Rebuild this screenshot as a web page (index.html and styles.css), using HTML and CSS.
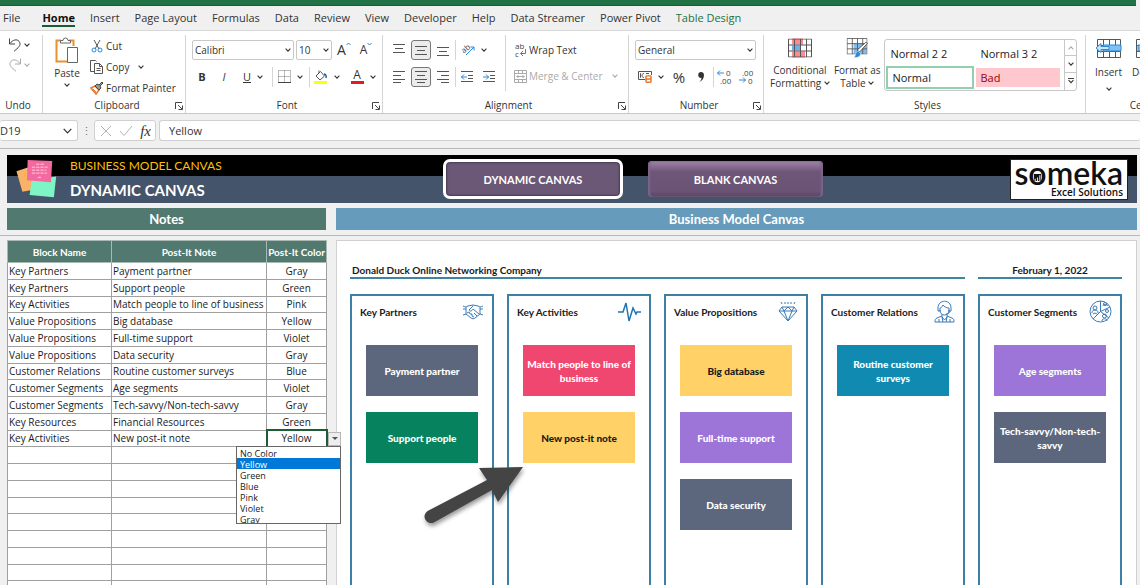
FILE: index.html
```html
<!DOCTYPE html>
<html lang="en">

<head>
    <meta charset="UTF-8">
    <meta name="viewport" content="width=device-width, initial-scale=1.0">
    <title>Business Model Canvas</title>
    <link rel="stylesheet" href="styles.css">
</head>

<body>
    <!-- shared icons -->
    <svg class="sprite" aria-hidden="true">
        <symbol id="chev" viewBox="0 0 6 4"><path d="M.6.7 3 3.1 5.4.7" fill="none" stroke="currentColor" stroke-width="1.1"/></symbol>
        <symbol id="launch" viewBox="0 0 8 8"><path d="M.5 7V.5H7M3 3l4 4M7.5 3.5v4h-4" fill="none" stroke="#444"/></symbol>
        <symbol id="grid" viewBox="0 0 24 19"><path d="M.5.5h23v18H.5zM.5 6.5h23M.5 12.5h23M6.500.5v18M12.500.5v18M18.500.5v18" fill="none" stroke="#555"/></symbol>
    </svg>

    <div class="titlebar"></div>
    <nav class="tabs">
        <a href="#">File</a>
        <a href="#" class="active">Home</a>
        <a href="#">Insert</a>
        <a href="#">Page Layout</a>
        <a href="#">Formulas</a>
        <a href="#">Data</a>
        <a href="#">Review</a>
        <a href="#">View</a>
        <a href="#">Developer</a>
        <a href="#">Help</a>
        <a href="#">Data Streamer</a>
        <a href="#">Power Pivot</a>
        <a href="#" class="design">Table Design</a>
    </nav>

    <div class="ribbon">
        <section class="group undo">
            <div class="group-body col">
                <button class="tool" aria-label="Undo"><svg width="14" height="14" viewBox="0 0 14 14" fill="none" stroke="#444"><path d="M1.500.5v5.500h5.500M1.700 5.700C5 1.500 9 .8 11 3.300c2 2.500.8 4.800-1 6.500L6 13.300"/></svg><svg class="chev"><use href="#chev"/></svg></button>
                <button class="tool off" aria-label="Redo"><svg width="14" height="14" viewBox="0 0 14 14" fill="none" stroke="currentColor"><path d="M12.500.5v5.500H7M12.300 5.700C9 1.500 5 .8 3 3.300c-2 2.500-.8 4.800 1 6.500l4 3.500"/></svg><svg class="chev"><use href="#chev"/></svg></button>
            </div>
            <footer>Undo</footer>
        </section>

        <section class="group clipboard">
            <div class="group-body">
                <button class="big">
                    <svg width="24" height="27" viewBox="0 0 24 27" fill="none"><path d="M6 3.500H1.500v21H12M14 3.500h4.500V9" stroke="#e8912d" stroke-width="2"/><path d="M5.500 6V3.500h2.500a2.500 2.500 0 0 1 5 0h2.500V6z" fill="#fff" stroke="#666"/><path d="M12.500 10.500h10v15h-10z" fill="#fff" stroke="#666"/></svg>
                    <span>Paste</span>
                    <svg class="chev"><use href="#chev"/></svg>
                </button>
                <div class="clip-list">
                    <button><svg width="14" height="14" viewBox="0 0 14 14" fill="none"><path d="M4 1l5 9M10 1L5 10" stroke="#555"/><circle cx="4" cy="11" r="2" stroke="#2b88d8"/><circle cx="10" cy="11" r="2" stroke="#2b88d8"/></svg>Cut</button>
                    <button><svg width="14" height="14" viewBox="0 0 14 14" fill="none" stroke="#555"><path d="M4.500 11.500H.5V.5h5l1 1M4.500 3.500h5l3 3v7h-8zM9.500 3.500v3h3M6.500 8.500h4M6.500 10.500h4"/></svg>Copy<svg class="chev"><use href="#chev"/></svg></button>
                    <button><svg width="14" height="14" viewBox="0 0 14 14" fill="none"><path d="M1 7l5 6 3-4-4-4z" fill="#fff" stroke="#e8762d" stroke-width="1.500"/><path d="M3 8l3 3" stroke="#e8762d"/><path d="M5 5l2-2 2 1 3-3 1 1-3 3 1 2-2 2z" fill="#999" stroke="#444"/></svg>Format Painter</button>
                </div>
            </div>
            <footer>Clipboard<svg class="launch"><use href="#launch"/></svg></footer>
        </section>

        <section class="group font">
            <div class="group-body col">
                <div class="row">
                    <span class="field font-name"><select aria-label="Font"><option>Calibri</option></select><svg class="chev"><use href="#chev"/></svg></span>
                    <span class="field font-size"><select aria-label="Font size"><option>10</option></select><svg class="chev"><use href="#chev"/></svg></span>
                    <button class="tool grow" aria-label="Increase font size"><span>A</span><svg width="5" height="4" viewBox="0 0 5 4"><path d="M.5 3l2-2 2 2" fill="none" stroke="#2b88d8"/></svg></button>
                    <button class="tool grow small" aria-label="Decrease font size"><span>A</span><svg width="5" height="4" viewBox="0 0 5 4"><path d="M.5 1l2 2 2-2" fill="none" stroke="#2b88d8"/></svg></button>
                </div>
                <div class="row">
                    <button class="tool"><b>B</b></button>
                    <button class="tool"><i>I</i></button>
                    <button class="tool wide"><u>U</u><svg class="chev"><use href="#chev"/></svg></button>
                    <span class="sep"></span>
                    <button class="tool wide" aria-label="Borders"><svg width="13" height="13" viewBox="0 0 13 13" fill="none" stroke="#777"><path d="M.5.5h12v12H.5zM6.500.5v12M.5 6.500h12" stroke-dasharray="1 1"/><path d="M0 12.500h13" stroke="#444"/></svg><svg class="chev"><use href="#chev"/></svg></button>
                    <span class="sep"></span>
                    <button class="tool wide" aria-label="Fill color"><svg width="14" height="14" viewBox="0 0 14 14"><path d="M2 6l4.500-4.500L10.500 6 6 10zM5 3V.5" fill="none" stroke="#555"/><path d="M10 4c2 0 2.500 2 2 4" fill="none" stroke="#1f5fa8" stroke-width="1.500"/><path d="M0 11h13v3H0z" fill="#ff0"/></svg><svg class="chev"><use href="#chev"/></svg></button>
                    <button class="tool wide" aria-label="Font color"><span class="font-color">A</span><svg class="chev"><use href="#chev"/></svg></button>
                </div>
            </div>
            <footer>Font<svg class="launch"><use href="#launch"/></svg></footer>
        </section>

        <section class="group alignment">
            <div class="group-body">
                <div class="col">
                    <div class="row">
                        <button class="tool" aria-label="Top align"><svg class="lines" viewBox="0 0 12 12"><path d="M0 .5h12M2 4.500h8M0 8.500h12"/></svg></button>
                        <button class="tool on" aria-label="Middle align"><svg class="lines" viewBox="0 0 12 12"><path d="M0 2.500h12M2 6.500h8M0 10.500h12"/></svg></button>
                        <button class="tool" aria-label="Bottom align"><svg class="lines" viewBox="0 0 12 12"><path d="M0 3.500h12M2 7.500h8M0 11.500h12"/></svg></button>
                        <span class="sep"></span>
                        <button class="tool wide" aria-label="Orientation"><svg width="14" height="13" viewBox="0 0 14 13" fill="none"><text x="0" y="9" font-size="8" fill="#444" transform="rotate(-40 4 6)">ab</text><path d="M5 12L13 4M9.500 4H13v3.500" stroke="#2b88d8"/></svg><svg class="chev"><use href="#chev"/></svg></button>
                    </div>
                    <div class="row">
                        <button class="tool" aria-label="Align left"><svg class="lines" viewBox="0 0 12 12"><path d="M0 .5h12M0 4.500h8M0 8.500h12M0 11.500h8"/></svg></button>
                        <button class="tool on" aria-label="Center"><svg class="lines" viewBox="0 0 12 12"><path d="M0 .5h12M2 4.500h8M0 8.500h12M2 11.500h8"/></svg></button>
                        <button class="tool" aria-label="Align right"><svg class="lines" viewBox="0 0 12 12"><path d="M0 .5h12M4 4.500h8M0 8.500h12M4 11.500h8"/></svg></button>
                        <span class="sep"></span>
                        <button class="tool" aria-label="Decrease indent"><svg class="lines" viewBox="0 0 12 12"><path d="M0 .5h12M7 4.500h5M7 7.500h5M0 10.500h12"/><path d="M6 6H0M3 3.500L.5 6 3 8.500" stroke="#2b88d8"/></svg></button>
                        <button class="tool" aria-label="Increase indent"><svg class="lines" viewBox="0 0 12 12"><path d="M0 .5h12M7 4.500h5M7 7.500h5M0 10.500h12"/><path d="M0 6h6M3 3.500L5.500 6 3 8.500" stroke="#2b88d8"/></svg></button>
                    </div>
                </div>
                <div class="wrap-list">
                    <button><svg width="13" height="14" viewBox="0 0 13 14" fill="none"><text x="1" y="6" font-size="8" fill="#444">ab</text><text x="1" y="14" font-size="8" fill="#444">c</text><path d="M11.500 6v4.500H6.500M9 8l-2.500 2.500L9 13" stroke="#2b88d8"/></svg>Wrap Text</button>
                    <button class="off"><svg width="13" height="13" viewBox="0 0 13 13" fill="none" stroke="currentColor"><path d="M.5.5h12v12H.5zM.5 3.500h12M.5 9.500h12M4.500.5v3M8.500.5v3M4.500 9.500v3M8.500 9.500v3M2.500 6.500h8M4.500 5L3 6.500 4.500 8M8.500 5L10 6.500 8.500 8"/></svg>Merge &amp; Center<svg class="chev"><use href="#chev"/></svg></button>
                </div>
            </div>
            <footer>Alignment<svg class="launch"><use href="#launch"/></svg></footer>
        </section>

        <section class="group number">
            <div class="group-body col">
                <div class="row">
                    <span class="field format"><select aria-label="Number format"><option>General</option></select><svg class="chev"><use href="#chev"/></svg></span>
                </div>
                <div class="row">
                    <button class="tool wide" aria-label="Accounting format"><svg width="14" height="13" viewBox="0 0 14 13" fill="none"><path d="M7 9.500H.5v-8h13V5M3 3.500H2.500v4H3M6 3.500c-1.500 0-2 1-2 2s.5 2 2 2M8 3.500h3" stroke="#555"/><path d="M8 6.500c0-1 5-1 5 0v5c0 1-5 1-5 0zM8 9h5" fill="#fff" stroke="#e8762d" stroke-width="1.500"/></svg><svg class="chev"><use href="#chev"/></svg></button>
                    <button class="tool percent">%</button>
                    <button class="tool" aria-label="Comma style"><svg width="8" height="12" viewBox="0 0 8 12"><path d="M4 1a3 3 0 1 0 .5 6C4.500 8.500 3.500 10 2 11c3-1 5-3.500 5-7 0-2-1.300-3-3-3z" fill="#333"/></svg></button>
                    <span class="sep"></span>
                    <button class="tool" aria-label="Increase decimal"><svg width="14" height="14" viewBox="0 0 14 14" fill="none"><path d="M7 3H.5M3 .5L.5 3 3 5.500" stroke="#2b88d8"/><text x="9" y="6" font-size="8" fill="#444">0</text><text x="3" y="14" font-size="8" fill="#444">.00</text></svg></button>
                    <button class="tool" aria-label="Decrease decimal"><svg width="14" height="14" viewBox="0 0 14 14" fill="none"><path d="M0 10h6.500M4 7.500L6.500 10 4 12.500" stroke="#2b88d8"/><text x="3" y="6" font-size="8" fill="#444">.00</text><text x="9" y="14" font-size="8" fill="#444">0</text></svg></button>
                </div>
            </div>
            <footer>Number<svg class="launch"><use href="#launch"/></svg></footer>
        </section>

        <section class="group styles">
            <div class="group-body">
                <button class="big">
                    <svg width="24" height="19" viewBox="0 0 24 19"><path d="M4 0h11v6H4zM4 13h13v6H4z" fill="#ff8a8f"/><path d="M4 7h8v5H4z" fill="#6cb0ea"/><use href="#grid" width="24" height="19"/></svg>
                    <span>Conditional<br>Formatting <svg class="chev"><use href="#chev"/></svg></span>
                </button>
                <button class="big">
                    <svg width="25" height="23" viewBox="0 0 25 23"><path d="M8 6h15v12H8z" fill="#83bdf0"/><use href="#grid" width="24" height="19"/><path d="M24 6l-9 10-3-2L22 5z" fill="#fff" stroke="#444"/><path d="M8 22c3 0 1-5 5-7l3 3c0 4-5 5-8 4z" fill="#2b88d8" stroke="#fff" stroke-width=".5"/></svg>
                    <span>Format as<br>Table <svg class="chev"><use href="#chev"/></svg></span>
                </button>
                <div class="gallery">
                    <div class="gallery-cells">
                        <button>Normal 2 2</button>
                        <button>Normal 3 2</button>
                        <button class="picked">Normal</button>
                        <button class="bad">Bad</button>
                    </div>
                    <div class="gallery-scroll">
                        <button class="off" aria-label="Scroll up"><svg class="chev up"><use href="#chev"/></svg></button>
                        <button aria-label="Scroll down"><svg class="chev"><use href="#chev"/></svg></button>
                        <button class="more" aria-label="More styles"><svg class="chev"><use href="#chev"/></svg></button>
                    </div>
                </div>
            </div>
            <footer>Styles</footer>
        </section>

        <section class="group cells">
            <div class="group-body">
                <button class="big">
                    <svg width="27" height="19" viewBox="0 0 27 19"><use href="#grid" x="2" width="24" height="19"/><path d="M8 6h18v6H8z" fill="#7fc0f5" stroke="#2b88d8"/><path d="M14 7.500H6V4.500L1 9l5 4.500v-3h8z" fill="#cfe6fa" stroke="#2b88d8"/></svg>
                    <span>Insert</span>
                    <svg class="chev"><use href="#chev"/></svg>
                </button>
                <button class="big">
                    <svg width="27" height="19" viewBox="0 0 27 19"><use href="#grid" x="2" width="24" height="19"/><path d="M4 6h12v6H4z" fill="#7fc0f5" stroke="#2b88d8"/></svg>
                    <span>Delete</span>
                    <svg class="chev"><use href="#chev"/></svg>
                </button>
            </div>
            <footer>Cells</footer>
        </section>
    </div>

    <div class="formula-bar">
        <div class="name-box"><input type="text" value="D19" aria-label="Name box"><svg width="9" height="6" viewBox="0 0 9 6"><path d="M.7.8l3.800 4 3.800-4" fill="none" stroke="#333" stroke-width="1.200"/></svg></div>
        <span class="grip">⋮</span>
        <div class="fx-box">
            <button aria-label="Cancel"><svg width="12" height="12" viewBox="0 0 12 12"><path d="M1 1l10 10M11 1L1 11" stroke="#b5b5b5" fill="none"/></svg></button>
            <button aria-label="Enter"><svg width="14" height="12" viewBox="0 0 14 12"><path d="M1 6l4 4.500L13 1" stroke="#b5b5b5" fill="none"/></svg></button>
            <button class="fx">fx</button>
        </div>
        <input class="formula" type="text" value="Yellow" aria-label="Formula">
    </div>

    <div class="frozen">
        <header class="banner">
            <svg class="notes-logo" viewBox="46 45 130 122" aria-hidden="true">
                <path d="M50 82l34-11 50 62-66 12z" fill="#f9b266"/>
                <path d="M96 110l75-12-7 64-74-7z" fill="#7df5c4"/>
                <path d="M84 48l75 3-4 65-73-6z" fill="#f4699f"/>
                <path d="M110 61h26M97 70h48M97 79h44M97 88h46M115 101h12" stroke="#ffd0e2" stroke-width="3" stroke-dasharray="10 3"/>
            </svg>
            <div class="titles">
                <p>BUSINESS MODEL CANVAS</p>
                <h1>DYNAMIC CANVAS</h1>
            </div>
            <button class="switch current">DYNAMIC CANVAS</button>
            <button class="switch">BLANK CANVAS</button>
            <div class="brand">
                <strong>s<span class="o">o<svg viewBox="0 0 6 6"><path d="M1 6V4M3 6V3M5 6V1" stroke="#ddd"/></svg></span>meka</strong>
                <span>Excel Solutions</span>
            </div>
        </header>
        <div class="section-bars">
            <h2 class="notes-bar">Notes</h2>
            <h2 class="canvas-bar">Business Model Canvas</h2>
        </div>
    </div>

    <main class="sheet">
        <div class="notes">
            <table>
                <thead>
                    <tr><th class="block">Block Name</th><th>Post-It Note</th><th class="color">Post-It Color</th></tr>
                </thead>
                <tbody>
                    <tr><td>Key Partners</td><td>Payment partner</td><td>Gray</td></tr>
                    <tr><td>Key Partners</td><td>Support people</td><td>Green</td></tr>
                    <tr><td>Key Activities</td><td>Match people to line of business</td><td>Pink</td></tr>
                    <tr><td>Value Propositions</td><td>Big database</td><td>Yellow</td></tr>
                    <tr><td>Value Propositions</td><td>Full-time support</td><td>Violet</td></tr>
                    <tr><td>Value Propositions</td><td>Data security</td><td>Gray</td></tr>
                    <tr><td>Customer Relations</td><td>Routine customer surveys</td><td>Blue</td></tr>
                    <tr><td>Customer Segments</td><td>Age segments</td><td>Violet</td></tr>
                    <tr><td>Customer Segments</td><td>Tech-savvy/Non-tech-savvy</td><td>Gray</td></tr>
                    <tr><td>Key Resources</td><td>Financial Resources</td><td>Green</td></tr>
                    <tr>
                        <td>Key Activities</td>
                        <td>New post-it note</td>
                        <td class="selected">Yellow
                            <button class="drop" aria-label="Show colors"></button>
                            <select class="colors" size="7" aria-label="Post-It Color">
                                <option>No Color</option>
                                <option selected>Yellow</option>
                                <option>Green</option>
                                <option>Blue</option>
                                <option>Pink</option>
                                <option>Violet</option>
                                <option>Gray</option>
                            </select>
                        </td>
                    </tr>
                    <tr><td></td><td></td><td></td></tr>
                    <tr><td></td><td></td><td></td></tr>
                    <tr><td></td><td></td><td></td></tr>
                    <tr><td></td><td></td><td></td></tr>
                    <tr><td></td><td></td><td></td></tr>
                    <tr><td></td><td></td><td></td></tr>
                    <tr><td></td><td></td><td></td></tr>
                    <tr><td></td><td></td><td></td></tr>
                    <tr><td></td><td></td><td></td></tr>
                </tbody>
            </table>
        </div>

        <div class="canvas">
            <div class="company">Donald Duck Online Networking Company</div>
            <div class="date">February 1, 2022</div>

            <section class="block">
                <h3>Key Partners
                    <svg width="22" height="18" viewBox="0 0 22 18"><path d="M1 3c2 1 3 1 5 0l5-1 5 1c2 1 3 1 5 0M1 12l3-1M21 12l-3-1M4 4v7l5 4c1 1 3 1 4 0l5-4V4M11 3L7 7c1 2 3 1 4-1l6 5M12 10l3 3M5 10l2-1 1 2 2 0 0 2 2 1M1 6h3M18 6h3"/></svg>
                </h3>
                <div class="post gray">Payment partner</div>
                <div class="post green">Support people</div>
            </section>
            <section class="block">
                <h3>Key Activities
                    <svg width="23" height="22" viewBox="0 0 23 22"><path class="bold" d="M0 11h5l3-9 3 18 4-13 3 6 1-2h4"/></svg>
                </h3>
                <div class="post pink">Match people to line of business</div>
                <div class="post yellow">New post-it note</div>
            </section>
            <section class="block">
                <h3>Value Propositions
                    <svg width="20" height="22" viewBox="0 0 20 22"><path d="M4 6h12l3 4-9 10L1 10zM1 10h18M4 6l2 4 4 10 4-10 2-4M6 10l4-4 4 4M3 1l1 2M7 1v2M10 1v2M13 1v2M17 1l-1 2"/></svg>
                </h3>
                <div class="post yellow">Big database</div>
                <div class="post violet">Full-time support</div>
                <div class="post gray">Data security</div>
            </section>
            <section class="block">
                <h3>Customer Relations
                    <svg width="21" height="23" viewBox="0 0 21 23"><path d="M4 8c0-9 13-9 13 0v3h-2V8c-2 0-5-1-6-3-1 2-2 3-3 3v3H4zM6 10c0 3 2 5 4.500 5S15 13 15 10M16 11c0 2-2 3-4 3M8 14v3l2.500 3 2.500-3v-3M8 16l-5 2c-2 1-2 2-2 4h19c0-2 0-3-2-4l-5-2M8 17l1 5M13 17l-1 5M5 19v3M16 19v3"/></svg>
                </h3>
                <div class="post blue">Routine customer surveys</div>
            </section>
            <section class="block">
                <h3>Customer Segments
                    <svg width="23" height="23" viewBox="0 0 23 23"><circle cx="11.500" cy="11.500" r="10.500"/><path d="M11.500 1v10.500L4 19M11.500 11.500L21 7M11.500 11.500L20 18M3 13c0-2 1-3 3-3s3 1 3 3M14 6c0-2 4-2 5 0M13 21c0-3 5-3 5 0M4 14l2-1 2 1"/><circle cx="6" cy="8" r="2"/><circle cx="16" cy="4" r="1.500"/><circle cx="15.500" cy="16" r="2"/><circle cx="18" cy="11" r="1.500"/></svg>
                </h3>
                <div class="post violet">Age segments</div>
                <div class="post gray">Tech-savvy/Non-tech-savvy</div>
            </section>

            <svg class="arrow" viewBox="0 0 110 70" aria-hidden="true"><path d="M103 2L59 3l8 12L7.600 46a6.500 6.500 0 0 0 6.200 11.400L72 25l6 12z" fill="#444"/></svg>
        </div>
    </main>
</body>

</html>
```
FILE: styles.css
```css
* {
    box-sizing: border-box;
}

body {
    margin: 0;
    height: 100vh;
    overflow: hidden;
    display: flex;
    flex-direction: column;
    background-color: #f0f0f0;
    font-family: "Open Sans", "Noto Sans", sans-serif;
    font-size: 10px;
    color: #333;
}

button,
input,
select {
    font: inherit;
    color: inherit;
    background: none;
    border: none;
    margin: 0;
    padding: 0;
}

h1,
h2,
h3,
p {
    margin: 0;
}

svg {
    flex: none;
    overflow: visible;
}

.sprite {
    display: none;
}

.chev {
    width: 6px;
    height: 4px;
}

.up {
    transform: rotate(180deg);
}

/* ribbon */
.titlebar {
    flex: none;
    height: 6px;
    margin-right: 4px;
    background-color: #217346;
    border-bottom: 1px solid #195c37;
}

.tabs {
    flex: none;
    display: flex;
    gap: 15px;
    height: 24px;
    padding-left: 3px;
    font-size: 11px;
    white-space: nowrap;
}

.tabs a {
    height: 21px;
    line-height: 23px;
    color: #333;
    text-decoration: none;
}

.tabs .active {
    margin-left: 7px;
    font-weight: bold;
    color: #111;
    border-bottom: 2px solid #185c37;
}

.tabs .design {
    color: #217346;
}

.ribbon {
    flex: none;
    display: flex;
    height: 84px;
    background-color: #fff;
    border-top: 1px solid #d8d8d8;
    border-bottom: 1px solid #c8c8c8;
    overflow: hidden;
    white-space: nowrap;
}

.group {
    flex: none;
    display: flex;
    flex-direction: column;
    margin: 4px 0 0;
    padding-left: 6px;
    border-right: 1px solid #d5d5d5;
}

.group-body {
    flex: none;
    display: flex;
    height: 63px;
}

.group footer {
    position: relative;
    height: 14px;
    line-height: 14px;
    text-align: center;
}

.launch {
    position: absolute;
    right: 2px;
    top: 4px;
    width: 8px;
    height: 8px;
}

.col {
    display: flex;
    flex-direction: column;
}

.row {
    display: flex;
    align-items: center;
    height: 27px;
    padding-top: 2px;
}

.tool {
    display: flex;
    align-items: center;
    justify-content: center;
    width: 20px;
    height: 20px;
    margin-right: 2px;
}

.tool.wide {
    width: 34px;
    gap: 6px;
}

.tool.on {
    background-color: #ececec;
    border: 1px solid #777;
    border-radius: 3px;
}

.off {
    color: #aaa;
}

.sep {
    width: 1px;
    height: 20px;
    background-color: #d5d5d5;
}

.big {
    display: flex;
    flex-direction: column;
    align-items: center;
    padding-top: 3px;
    line-height: 13px;
}

.field {
    position: relative;
    display: flex;
    align-items: center;
    height: 20px;
    margin-right: 2px;
    border: 1px solid #c8c8c8;
    border-radius: 2px;
}

.field select {
    appearance: none;
    width: 100%;
    padding-left: 2px;
}

.field .chev {
    position: absolute;
    right: 2px;
}

.undo {
    width: 43px;
    padding: 0 6px 0 0;
}

.undo .tool {
    width: 38px;
    height: 20px;
}

.undo .tool svg + svg {
    margin-left: 2px;
}

.clipboard {
    width: 143px;
}

.clipboard .group-body {
    gap: 5px;
}

.clipboard .big {
    width: 36px;
    gap: 3px;
    padding-top: 2px;
}

.clip-list button,
.wrap-list button {
    display: flex;
    align-items: center;
    gap: 2px;
    height: 21px;
}

.clip-list .chev,
.wrap-list .chev {
    margin-left: 7px;
}

.font {
    width: 197px;
}

.font-name {
    width: 102px;
}

.font-size {
    width: 36px;
}

.grow {
    align-items: flex-start;
    font-size: 14px;
    line-height: 20px;
}

.grow svg {
    margin-top: 2px;
}

.grow.small {
    font-size: 12px;
}

.font .row b,
.font .row i,
.font .row u {
    font-size: 11px;
}

.font-color {
    width: 13px;
    font-size: 12px;
    line-height: 12px;
    border-bottom: 3px solid #e01b24;
}

.alignment {
    width: 246px;
}

.lines {
    width: 12px;
    height: 12px;
    fill: none;
    stroke: #555;
}

.alignment .sep {
    margin-right: 1px;
}

.wrap-list {
    margin-left: 4px;
    padding: 2px 0 0 8px;
    border-left: 1px solid #d5d5d5;
    height: 56px;
}

.wrap-list button {
    height: 26px;
}

.number {
    width: 135px;
}

.format {
    width: 121px;
}

.number .tool.wide {
    width: 32px;
}

.percent {
    font-size: 15px;
}

.styles {
    width: 322px;
}

.styles .group-body {
    gap: 4px;
}

.styles .big {
    gap: 6px;
}

.styles .big > svg {
    height: 20px;
}

.styles .big .chev {
    vertical-align: 2px;
}

.gallery {
    display: flex;
    height: 52px;
    margin-top: 4px;
    border: 1px solid #c8c8c8;
    border-radius: 3px;
}

.gallery-cells {
    display: grid;
    grid-template-columns: 88px 84px;
    grid-template-rows: 24px 23px;
    gap: 1px 2px;
    padding: 1px 4px 1px 1px;
    font-size: 11px;
}

.gallery-cells button {
    padding-left: 4px;
    text-align: left;
    color: #222;
}

.gallery-cells .picked {
    border: 2px solid #93cfae;
}

.gallery-cells .bad {
    margin: 2px 0;
    background-color: #ffc7ce;
    color: #9c0006;
}

.gallery-scroll {
    display: grid;
    width: 12px;
    border-left: 1px solid #c8c8c8;
}

.gallery-scroll button {
    display: flex;
    align-items: center;
    justify-content: center;
}

.gallery-scroll button + button {
    border-top: 1px solid #c8c8c8;
}

.gallery-scroll .more .chev {
    height: 6px;
    border-top: 1px solid #444;
}

.cells {
    padding-left: 9px;
}

.cells .group-body {
    gap: 10px;
}

.cells .big {
    gap: 8px;
    padding-top: 4px;
}

.cells footer {
    padding-left: 24px;
}

/* formula bar */
.formula-bar {
    flex: none;
    display: flex;
    align-items: stretch;
    height: 35px;
    padding: 6px 0 7px;
    border-bottom: 1px solid #b8b8b8;
    font-size: 11px;
}

.name-box,
.fx-box,
.formula {
    display: flex;
    align-items: center;
    background-color: #fff;
    border: 1px solid #d0d0d0;
    border-radius: 3px;
}

.name-box {
    width: 78px;
    border-left: none;
}

.name-box input {
    flex: 1;
    min-width: 0;
}

.name-box svg {
    margin-right: 5px;
}

.grip {
    width: 16px;
    line-height: 22px;
    text-align: center;
    color: #777;
}

.fx-box {
    justify-content: space-between;
    width: 62px;
    padding: 0 4px 0 5px;
}

.fx-box button {
    display: flex;
}

.fx {
    font-family: "Liberation Serif", serif;
    font-size: 15px;
    font-style: italic;
    line-height: 18px;
}

.formula {
    flex: 1;
    margin-left: 3px;
    padding-left: 9px;
    border-right: none;
}

/* frozen header rows */
.frozen {
    flex: none;
    padding: 6px 3px 5px 7px;
    border-bottom: 1px solid #b8b8b8;
    font-family: Lato, "Open Sans", sans-serif;
    color: #fff;
}

.banner {
    display: flex;
    align-items: center;
    height: 48px;
    padding: 0 9px 0 8px;
    background: linear-gradient(#000 21px, #44546a 21px);
}

.notes-logo {
    width: 43px;
    height: 40px;
}

.titles {
    width: 373px;
    margin-left: 12px;
}

.titles p {
    font-size: 12px;
    line-height: 22px;
    color: #ffc000;
}

.titles h1 {
    font-size: 15px;
    line-height: 26px;
}

.switch {
    width: 175px;
    height: 36px;
    margin-right: 25px;
    border-radius: 4px;
    background: linear-gradient(#a184ab, #6e5678 30%, #6a5375 85%, #584463);
    box-shadow: inset 2px 0 2px #7d6588, inset -2px 0 2px #7d6588;
    font-size: 11px;
    font-weight: bold;
}

.switch.current {
    width: 180px;
    height: 40px;
    border: 3px solid #fff;
    border-radius: 7px;
    background: #6b5776;
    box-shadow: inset 0 0 2px 1px #4a3a54;
}

.brand {
    display: flex;
    flex-direction: column;
    align-items: flex-end;
    width: 118px;
    height: 41px;
    margin-left: auto;
    padding-right: 4px;
    background-color: #fff;
    border: 1px solid #222;
    color: #111;
    font-family: "Open Sans", sans-serif;
    font-size: 10px;
    font-weight: 600;
    line-height: 12px;
}

.brand strong {
    font-family: Lato, sans-serif;
    font-size: 32px;
    font-weight: 600;
    line-height: 26px;
}

.brand .o {
    position: relative;
}

.brand .o svg {
    position: absolute;
    left: 6px;
    bottom: 11px;
    width: 7px;
    height: 7px;
    background-color: #111;
}

.section-bars {
    display: flex;
    gap: 10px;
    margin-top: 5px;
}

.section-bars h2 {
    font-size: 13px;
    line-height: 22px;
    text-align: center;
}

.notes-bar {
    width: 319px;
    background-color: #52796f;
}

.canvas-bar {
    flex: 1;
    background-color: #669bbc;
}

/* sheet */
.sheet {
    flex: 1;
    min-height: 0;
    display: flex;
    align-items: flex-start;
    gap: 9px;
    padding: 4px 3px 0 7px;
    font-family: Lato, "Open Sans", sans-serif;
    color: #1a1a1a;
}

/* keeps the open color list above the canvas */
.notes {
    position: relative;
    z-index: 1;
    flex: none;
    width: 320px;
}

.notes table {
    width: 100%;
    height: 358px;
    table-layout: fixed;
    border-collapse: collapse;
    background-color: #fff;
    font-family: "Open Sans", sans-serif;
    font-size: 10px;
    line-height: 14px;
    white-space: nowrap;
}

.notes th {
    height: 22px;
    padding: 0;
    background-color: #52796f;
    color: #fff;
    font-family: Lato, sans-serif;
    font-size: 10px;
    border: 1px solid #a8b8b3;
}

.notes .block {
    width: 104px;
}

.notes .color {
    width: 60px;
}

.notes td {
    height: 16px;
    padding: 0 1px;
    border: 1px solid #a0a0a0;
}

.notes td:last-child {
    text-align: center;
}

.notes .selected {
    position: relative;
    outline: 2px solid #1e5c38;
    outline-offset: -1px;
}

.drop {
    position: absolute;
    left: 61px;
    top: 1px;
    width: 13px;
    height: 14px;
    background-color: #eee;
    border: 1px solid #b8b8b8;
}

.drop::after {
    content: "";
    display: block;
    width: 0;
    margin: auto;
    border: 3px solid transparent;
    border-top-color: #555;
    border-bottom: none;
}

.colors {
    position: absolute;
    left: -31px;
    top: 15px;
    z-index: 2;
    width: 105px;
    height: 78px;
    background-color: #fff;
    border: 1px solid #666;
    border-radius: 0;
    overflow: hidden;
    outline: none;
    font-size: 9px;
    text-align: left;
}

.colors option {
    min-height: 11px;
    height: 11px;
    padding: 0 3px;
    line-height: 11px;
}

.colors option:checked {
    background: linear-gradient(#0078d7, #0078d7);
    color: #fff;
}

.canvas {
    position: relative;
    flex: 1;
    align-self: stretch;
    display: grid;
    grid-template-columns: repeat(5, 1fr);
    grid-template-rows: 38px 1fr;
    column-gap: 13px;
    row-gap: 15px;
    padding: 0 14px 0 13px;
    background-color: #fff;
    border: 1px solid #d0d0d0;
    border-bottom: none;
}

.company,
.date {
    display: flex;
    align-items: flex-end;
    font-size: 10px;
    font-weight: bold;
    line-height: 13px;
    border-bottom: 2px solid #3d85a0;
}

.company {
    grid-column: span 4;
    padding-left: 2px;
}

.date {
    justify-content: center;
}

.canvas .block {
    display: flex;
    flex-direction: column;
    gap: 16px;
    padding: 0 14px;
    border: 2px solid #3c80a8;
    border-bottom: none;
}

.block h3 {
    display: flex;
    align-items: center;
    justify-content: space-between;
    height: 33px;
    margin: 0 -6px 0 -6px;
    padding-bottom: 2px;
    font-size: 10px;
    white-space: nowrap;
}

.block h3 svg {
    fill: none;
    stroke: #3b7bb5;
    stroke-width: 1;
}

.block h3 .bold {
    stroke: #1f74b0;
    stroke-width: 1.5;
}

.post {
    display: flex;
    align-items: center;
    justify-content: center;
    height: 51px;
    color: #fff;
    font-size: 10px;
    font-weight: 900;
    line-height: 14px;
    text-align: center;
}

.gray {
    background-color: #5c677d;
}

.green {
    background-color: #06825f;
}

.pink {
    background-color: #ef476f;
}

.yellow {
    background-color: #ffd166;
    color: #1a1a1a;
}

.violet {
    background-color: #9d74d8;
}

.blue {
    background-color: #118ab2;
}

.arrow {
    position: absolute;
    left: 83px;
    top: 224px;
    width: 110px;
    height: 70px;
    filter: drop-shadow(1px 3px 2px rgba(0, 0, 0, 0.4));
}
```
